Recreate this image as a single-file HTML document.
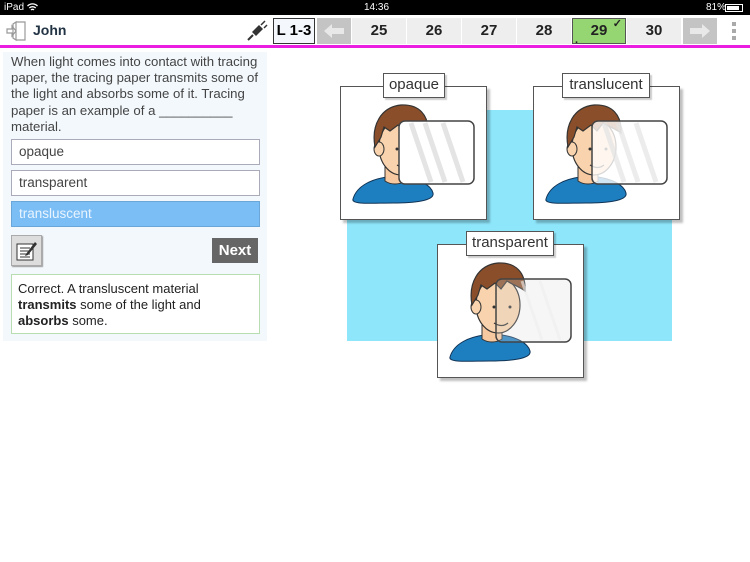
<!DOCTYPE html>
<html><head><meta charset="utf-8"><style>
*{margin:0;padding:0;box-sizing:border-box}
body{width:750px;height:562px;background:#fff;font-family:"Liberation Sans",sans-serif;position:relative;overflow:hidden}
.a{position:absolute}
.nb{position:absolute;top:18px;height:26px;background:#eeeeee;font-weight:bold;font-size:15px;color:#222;text-align:center;line-height:26px}
.opt{position:absolute;left:11px;width:249px;height:26px;border:1px solid #aab;background:#fff;font-size:13.5px;color:#444;padding-left:7px;line-height:24px}
.lbl{position:absolute;background:#fff;border:1.5px solid #555;font-size:15px;color:#333;text-align:center;line-height:22px;height:25px;box-shadow:2px 2px 1px rgba(0,0,0,.2)}
.card{position:absolute;background:#fff;border:1.5px solid #555;box-shadow:3px 3px 2px rgba(0,0,0,.25)}
</style></head><body>
<div class="a" style="left:0;top:0;width:750px;height:15px;background:#000;color:#fff;font-size:10px">
<span class="a" style="left:4px;top:2px">iPad</span>
<svg class="a" style="left:27px;top:3px" width="11" height="9" viewBox="0 0 11 9"><path d="M0.5 3A7 7 0 0 1 10.5 3M2.3 5A4.5 4.5 0 0 1 8.7 5M4 7A2 2 0 0 1 7 7" stroke="#fff" stroke-width="1.3" fill="none"/></svg>
<span class="a" style="left:364px;top:2px">14:36</span>
<span class="a" style="left:706px;top:2px">81%</span>
<div class="a" style="left:725px;top:4px;width:18px;height:8px;border:1px solid #fff;padding:1px"><div style="width:12px;height:4px;background:#fff"></div></div>
</div>
<svg class="a" style="left:6px;top:20px" width="22" height="22" viewBox="0 0 22 22"><path d="M10 2h9v18h-9M10 2v18l-3-2V4zM1 9h5V6l4 5-4 5v-3H1z" fill="none" stroke="#999" stroke-width="1.2"/></svg>
<div class="a" style="left:33px;top:22px;font-weight:bold;font-size:14px;color:#234">John</div>
<svg class="a" style="left:246px;top:20px" width="22" height="22" viewBox="0 0 22 22"><path d="M2 20l5-5" stroke="#333" stroke-width="2"/><path d="M6 12l4 4 7-7-4-4z" fill="#333"/><path d="M15 5l4-4M18 8l3-3" stroke="#333" stroke-width="1.5"/></svg>
<div class="a" style="left:273px;top:18px;width:42px;height:26px;border:1px solid #333;background:#f4f8fc;font-weight:bold;font-size:15px;line-height:24px;text-align:center">L 1-3</div>
<div class="nb" style="left:317px;width:34px;background:#c4c4c4"><svg width="20" height="14" viewBox="0 0 20 14" style="margin-top:6px"><path d="M0 7l8-7v4h12v6H8v4z" fill="#e8e8e8"/></svg></div>
<div class="nb" style="left:352px;width:54px">25</div>
<div class="nb" style="left:407px;width:54px">26</div>
<div class="nb" style="left:462px;width:54px">27</div>
<div class="nb" style="left:517px;width:54px">28</div>
<div class="nb" style="left:572px;width:54px;background:#96d672;border:1px solid #555;line-height:24px">29<span class="a" style="right:3px;top:-7px;font-size:11px">✓</span><span class="a" style="left:2px;top:9px;font-size:11px">.</span></div>
<div class="nb" style="left:627px;width:54px">30</div>
<div class="nb" style="left:683px;width:34px;background:#c4c4c4"><svg width="20" height="14" viewBox="0 0 20 14" style="margin-top:6px"><path d="M20 7l-8-7v4H0v6h12v4z" fill="#e8e8e8"/></svg></div>
<div class="a" style="left:732px;top:22px;width:4px;height:4px;background:#aaa"></div>
<div class="a" style="left:732px;top:29px;width:4px;height:4px;background:#aaa"></div>
<div class="a" style="left:732px;top:36px;width:4px;height:4px;background:#aaa"></div>
<div class="a" style="left:0;top:45px;width:750px;height:3px;background:#e91ee0"></div>

<div class="a" style="left:3px;top:52px;width:264px;height:289px;background:#f3f8fc"></div>
<div class="a" style="left:11px;top:54px;width:255px;font-size:13.2px;line-height:16.2px;color:#444">When light comes into contact with tracing paper, the tracing paper transmits some of the light and absorbs some of it. Tracing paper is an example of a __________ material.</div>
<div class="opt" style="top:139px">opaque</div>
<div class="opt" style="top:170px">transparent</div>
<div class="opt" style="top:201px;background:#7bbdf5;border-color:#6aa6d8;color:#e8f4ff">transluscent</div>
<div class="a" style="left:11px;top:235px;width:31px;height:31px;background:#ddd;border:1px solid #aaa;box-shadow:1px 1px 1px #999">
<svg width="29" height="29" viewBox="0 0 29 29"><rect x="5" y="8" width="16" height="16" fill="#fff" stroke="#333"/><path d="M8 12h10M8 15h10M8 18h10M8 21h10" stroke="#333"/><path d="M14 18l9-12 2 2-9 11-3 1z" fill="#333"/></svg></div>
<div class="a" style="left:212px;top:238px;width:46px;height:25px;background:#666;color:#fff;font-weight:bold;font-size:15px;text-align:center;line-height:25px">Next</div>
<div class="a" style="left:11px;top:274px;width:249px;height:60px;background:#fff;border:1px solid #b8ddb0;font-size:13px;line-height:16px;color:#222;padding:6px 6px">Correct. A transluscent material <b>transmits</b> some of the light and <b>absorbs</b> some.</div>

<div class="a" style="left:347px;top:110px;width:325px;height:231px;background:#8ee6fa"></div>
<svg width="0" height="0" style="position:absolute"><defs>
<g id="face">
<path d="M12 112c4-14 20-20 34-22h18c14 2 26 8 28 16 2 8-20 10-40 10-20 0-42 2-40-4z" fill="#1e7fc0" stroke="#135" stroke-width="1"/>
<path d="M44 80l0 14c6 4 14 4 20 0l0-14z" fill="#f7c9a0" stroke="#333" stroke-width="1"/>
<ellipse cx="60" cy="60" rx="22" ry="28" fill="#f9d3ad" stroke="#333" stroke-width="1.2"/>
<ellipse cx="38" cy="62" rx="5" ry="7" fill="#f9d3ad" stroke="#333" stroke-width="1"/>
<path d="M34 60c-4-22 6-40 26-42 18-1 28 10 27 28-5-4-12-6-18-10l-6 8-6-6-8 6-6-4-3 10z" fill="#8a4f2a" stroke="#333" stroke-width="1.2"/>
<circle cx="56" cy="62" r="1.5" fill="#333"/><circle cx="72" cy="62" r="1.5" fill="#333"/>
<path d="M56 78q8 5 14 0" fill="none" stroke="#333" stroke-width="1.2"/>
</g></defs></svg>

<div class="card" style="left:340px;top:86px;width:147px;height:134px"><svg width="147" height="134"><use href="#face"/><rect x="58" y="34" width="75" height="63" rx="6" fill="#fff" stroke="#444" stroke-width="1.5"/><path d="M70 36l20 59M84 36l20 59M102 36l20 59" stroke="#e4e4e4" stroke-width="5"/></svg></div>
<div class="card" style="left:533px;top:86px;width:147px;height:134px"><svg width="147" height="134"><use href="#face"/><rect x="58" y="34" width="75" height="63" rx="6" fill="#fff" fill-opacity=".8" stroke="#444" stroke-width="1.5"/><path d="M70 36l20 59M84 36l20 59M102 36l20 59" stroke="#e4e4e4" stroke-width="5" opacity=".7"/></svg></div>
<div class="card" style="left:437px;top:244px;width:147px;height:134px"><svg width="147" height="134"><use href="#face"/><rect x="58" y="34" width="75" height="63" rx="6" fill="#ddd" fill-opacity=".25" stroke="#444" stroke-width="1.5"/><path d="M84 36l20 59M102 36l20 59" stroke="#eee" stroke-width="3" opacity=".6"/></svg></div>
<div class="lbl" style="left:383px;top:73px;width:62px">opaque</div>
<div class="lbl" style="left:562px;top:73px;width:88px">translucent</div>
<div class="lbl" style="left:466px;top:231px;width:88px">transparent</div>
</body></html>
